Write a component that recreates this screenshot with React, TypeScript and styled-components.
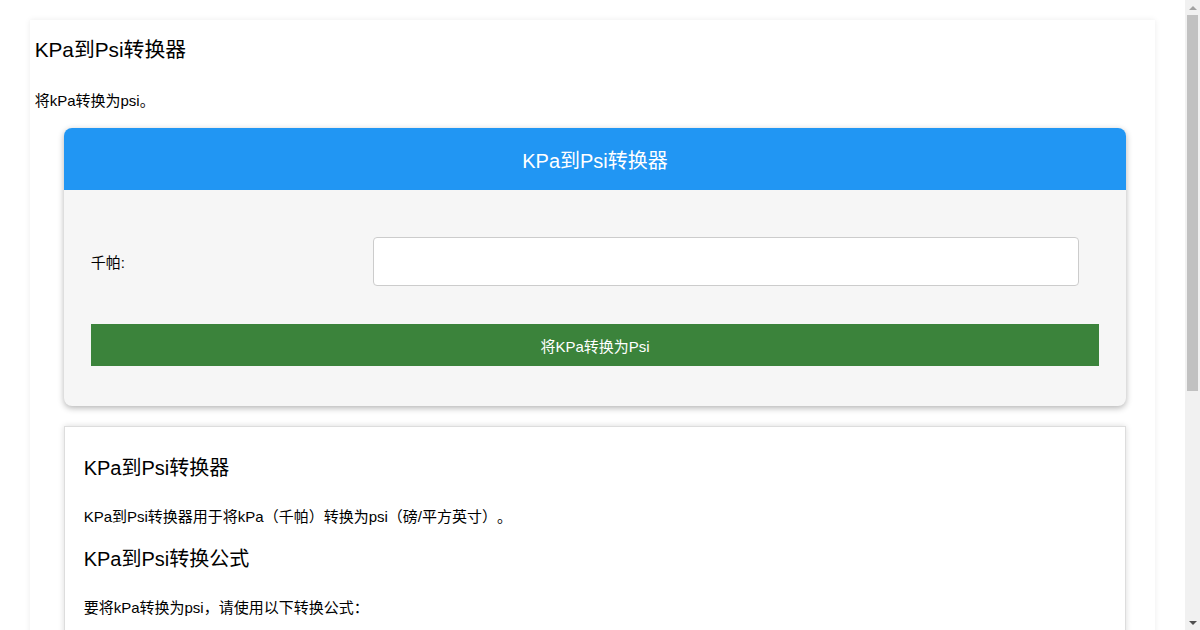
import React from "react";
import styled, { createGlobalStyle } from "styled-components";

const Global = createGlobalStyle`
  html, body { margin: 0; padding: 0; background: #fff; }
  body {
    font-family: "Liberation Sans", Arial, "Noto Sans CJK SC", sans-serif;
    color: #000;
    text-spacing-trim: space-all;
  }
`;

const Viewport = styled.div`
  margin-right: 15px;
`;

const ScrollBar = styled.div`
  position: fixed;
  top: 0;
  right: 0;
  width: 15px;
  height: 100vh;
  background: #f1f1f1;
  display: flex;
  flex-direction: column;
`;

const Arrow = styled.div<{ $down?: boolean }>`
  height: 15px;
  display: flex;
  align-items: center;
  justify-content: center;
  &::before {
    content: "";
    width: 0;
    height: 0;
    border-left: 4px solid transparent;
    border-right: 4px solid transparent;
    ${(p) =>
      p.$down
        ? "border-top: 4px solid #505050;"
        : "border-bottom: 4px solid #a3a3a3;"}
  }
`;

const Track = styled.div`
  flex: 1;
  padding: 0 2px;
`;

const Thumb = styled.div`
  height: 376px;
  background: #c1c1c1;
`;

const Page = styled.div`
  width: 95%;
  margin: 20px auto;
  padding: 5px 5px 16px;
  box-sizing: border-box;
  background: #fff;
  box-shadow: 0 0 6px rgba(0, 0, 0, 0.08);
`;

const Title = styled.h1`
  font-size: 20.8px;
  font-weight: normal;
  margin: 10px 0 0;
  line-height: 30px;
`;

const Lead = styled.p`
  font-size: 15px;
  margin: 26px 0 0;
  line-height: 20px;
`;

const Card = styled.div`
  margin: 17px 24px 0 29px;
  background: #f6f6f6;
  border-radius: 8px;
  box-shadow: 0 2px 6px rgba(0, 0, 0, 0.3);
  overflow: hidden;
`;

const CardHeader = styled.div`
  background: #2196f3;
  color: #fff;
  height: 62px;
  display: flex;
  align-items: center;
  justify-content: center;
  font-size: 20px;
`;

const CardBody = styled.div`
  padding: 47px 27px 40px;
  display: flex;
  flex-direction: column;
`;

const Row = styled.div`
  display: flex;
  align-items: center;
  padding-right: 20px;
`;

const Label = styled.label`
  width: 282px;
  font-size: 15px;
`;

const Input = styled.input`
  flex: 1;
  height: 49px;
  box-sizing: border-box;
  border: 1px solid #ccc;
  border-radius: 4px;
  background: #fff;
  font-size: 16px;
  padding: 0 10px;
  outline: none;
`;

const Button = styled.button`
  margin-top: 38px;
  height: 42px;
  border: none;
  background: #3b833b;
  color: #fff;
  font-size: 15px;
  font-family: inherit;
  cursor: pointer;
`;

const Info = styled.div`
  margin: 20px 24px 0 29px;
  border: 1px solid #ddd;
  box-shadow: 0 0 6px rgba(0, 0, 0, 0.15);
  padding: 26px 19px 20px;
  background: #fff;
`;

const H2 = styled.h2<{ $top?: number }>`
  font-size: 20px;
  font-weight: normal;
  margin: ${(p) => p.$top ?? 0}px 0 0;
  line-height: 30px;
`;

const Text = styled.p<{ $top?: number }>`
  font-size: 15px;
  line-height: 20px;
  margin: ${(p) => p.$top ?? 20}px 0 0;
`;

export default function App() {
  return (
    <>
      <Global />
      <Viewport>
        <Page>
          <Title>KPa到Psi转换器</Title>
          <Lead>将kPa转换为psi。</Lead>
          <Card>
            <CardHeader>KPa到Psi转换器</CardHeader>
            <CardBody>
              <Row>
                <Label>千帕:</Label>
                <Input type="text" />
              </Row>
              <Button>将KPa转换为Psi</Button>
            </CardBody>
          </Card>
          <Info>
            <H2>KPa到Psi转换器</H2>
            <Text $top={24}>KPa到Psi转换器用于将kPa（千帕）转换为psi（磅/平方英寸）。</Text>
            <H2 $top={17}>KPa到Psi转换公式</H2>
            <Text $top={24}>要将kPa转换为psi，请使用以下转换公式：</Text>
            <Text>psi = kPa × 0.145038</Text>
            <Text>例如，100 kPa = 100 × 0.145038 = 14.5038 psi</Text>
            <H2 $top={17}>KPa到Psi转换表</H2>
            <Text $top={24}>1 kPa = 0.145038 psi</Text>
            <Text>10 kPa = 1.45038 psi</Text>
            <Text>100 kPa = 14.5038 psi</Text>
            <Text>1000 kPa = 145.038 psi</Text>
            <Text>1 psi = 6.89476 kPa</Text>
          </Info>
        </Page>
      </Viewport>
      <ScrollBar aria-hidden="true">
        <Arrow />
        <Track>
          <Thumb />
        </Track>
        <Arrow $down />
      </ScrollBar>
    </>
  );
}
